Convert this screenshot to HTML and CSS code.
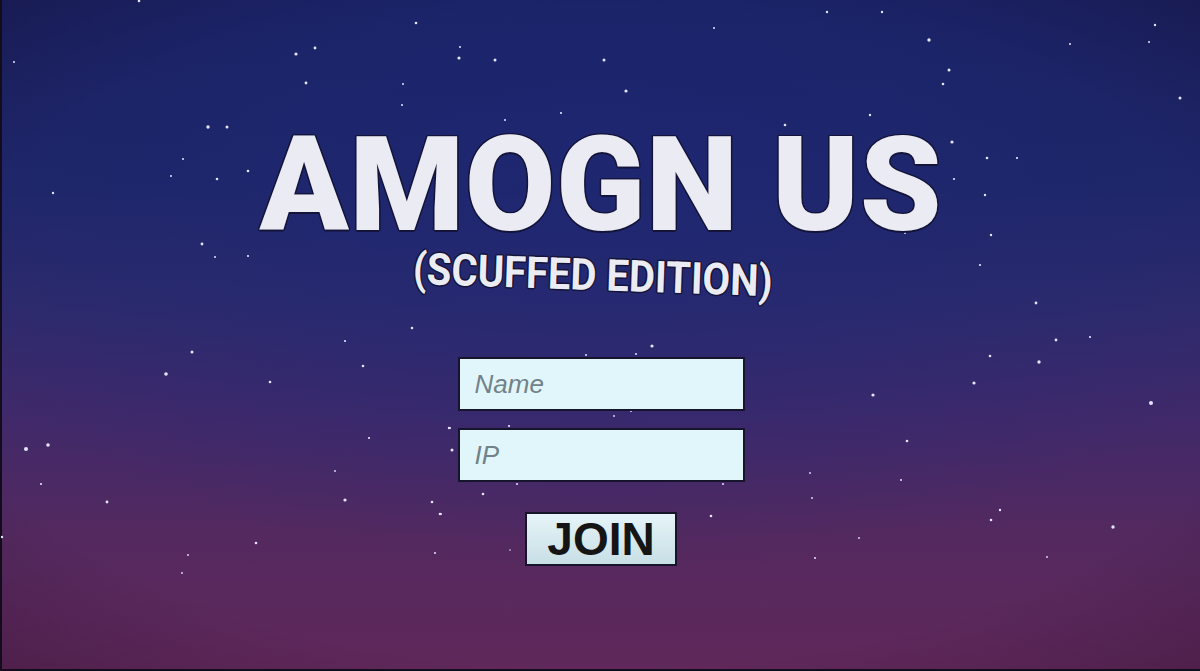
FILE: index.html
```html
<!DOCTYPE html>
<html lang="en">
<head>
  <meta charset="UTF-8" />
  <meta name="viewport" content="width=device-width, initial-scale=1.0"/>
  <title>Amogn Us</title>
  <link rel="stylesheet" href="styles.css">
</head>
<body>

  <!-- night sky -->
  <svg class="stars" viewBox="0 0 1200 671" preserveAspectRatio="none">
    <g fill="#e4e4ff">
      <circle cx="139" cy="1" r="1.3"/>
      <circle cx="14" cy="62" r="1"/>
      <circle cx="296" cy="54" r="1.6"/>
      <circle cx="315" cy="48" r="1.4"/>
      <circle cx="306" cy="83" r="1.4"/>
      <circle cx="208" cy="127" r="1.7"/>
      <circle cx="227" cy="127" r="1.5"/>
      <circle cx="183" cy="159" r="1"/>
      <circle cx="171" cy="176" r="1"/>
      <circle cx="217" cy="179" r="1.3"/>
      <circle cx="248" cy="171" r="1.3"/>
      <circle cx="53" cy="193" r="1.2"/>
      <circle cx="202" cy="244" r="1.4"/>
      <circle cx="215" cy="257" r="1"/>
      <circle cx="248" cy="256" r="1.1"/>
      <circle cx="416" cy="23" r="1.3"/>
      <circle cx="460" cy="47" r="1"/>
      <circle cx="459" cy="58" r="1.6"/>
      <circle cx="495" cy="60" r="1.5"/>
      <circle cx="604" cy="60" r="1.5"/>
      <circle cx="626" cy="91" r="1.6"/>
      <circle cx="561" cy="113" r="1.1"/>
      <circle cx="505" cy="120" r="1"/>
      <circle cx="714" cy="28" r="1"/>
      <circle cx="785" cy="125" r="1.3"/>
      <circle cx="403" cy="84" r="1"/>
      <circle cx="402" cy="105" r="1"/>
      <circle cx="827" cy="12" r="1.2"/>
      <circle cx="882" cy="12" r="1.2"/>
      <circle cx="929" cy="40" r="1.7"/>
      <circle cx="949" cy="70" r="1.5"/>
      <circle cx="943" cy="84" r="1.3"/>
      <circle cx="870" cy="115" r="1.2"/>
      <circle cx="952" cy="142" r="1.6"/>
      <circle cx="987" cy="158" r="1.3"/>
      <circle cx="1017" cy="158" r="1.1"/>
      <circle cx="954" cy="179" r="1.1"/>
      <circle cx="985" cy="195" r="1.2"/>
      <circle cx="991" cy="235" r="1.2"/>
      <circle cx="980" cy="265" r="1.1"/>
      <circle cx="1070" cy="44" r="1"/>
      <circle cx="1155" cy="25" r="1.2"/>
      <circle cx="1149" cy="42" r="1"/>
      <circle cx="1180" cy="98" r="1.5"/>
      <circle cx="905" cy="233" r="1"/>
      <circle cx="192" cy="352" r="1.5"/>
      <circle cx="166" cy="374" r="1.8"/>
      <circle cx="270" cy="382" r="1.3"/>
      <circle cx="26" cy="449" r="2"/>
      <circle cx="48" cy="445" r="1.8"/>
      <circle cx="41" cy="484" r="1.1"/>
      <circle cx="107" cy="502" r="1.4"/>
      <circle cx="2" cy="537" r="1.2"/>
      <circle cx="256" cy="543" r="1.3"/>
      <circle cx="188" cy="555" r="0.9"/>
      <circle cx="182" cy="573" r="0.9"/>
      <circle cx="345" cy="500" r="1.6"/>
      <circle cx="345" cy="341" r="1.1"/>
      <circle cx="363" cy="366" r="1.3"/>
      <circle cx="369" cy="438" r="1.1"/>
      <circle cx="335" cy="471" r="0.9"/>
      <circle cx="412" cy="328" r="1.3"/>
      <circle cx="432" cy="502" r="1.3"/>
      <circle cx="440" cy="514" r="1.3"/>
      <circle cx="435" cy="553" r="1"/>
      <circle cx="449" cy="428" r="1.2"/>
      <circle cx="1036" cy="303" r="1.4"/>
      <circle cx="1056" cy="340" r="1.4"/>
      <circle cx="1090" cy="337" r="1.1"/>
      <circle cx="990" cy="356" r="1.3"/>
      <circle cx="1039" cy="362" r="1.7"/>
      <circle cx="974" cy="383" r="1.6"/>
      <circle cx="873" cy="395" r="1.6"/>
      <circle cx="1151" cy="403" r="2"/>
      <circle cx="907" cy="441" r="1.3"/>
      <circle cx="810" cy="473" r="0.9"/>
      <circle cx="901" cy="480" r="1"/>
      <circle cx="812" cy="498" r="0.9"/>
      <circle cx="1000" cy="510" r="1.2"/>
      <circle cx="991" cy="520" r="1.3"/>
      <circle cx="1113" cy="527" r="1.7"/>
      <circle cx="859" cy="538" r="0.9"/>
      <circle cx="815" cy="558" r="1"/>
      <circle cx="1047" cy="557" r="0.9"/>
      <circle cx="652" cy="346" r="1.6"/>
      <circle cx="586" cy="355" r="1"/>
      <circle cx="636" cy="354" r="1"/>
      <circle cx="631" cy="411" r="1"/>
      <circle cx="614" cy="416" r="0.9"/>
      <circle cx="450" cy="428" r="1.1"/>
      <circle cx="509" cy="426" r="1.1"/>
      <circle cx="452" cy="450" r="1.5"/>
      <circle cx="517" cy="484" r="1"/>
      <circle cx="483" cy="494" r="1.3"/>
      <circle cx="441" cy="514" r="1"/>
      <circle cx="711" cy="516" r="1.3"/>
      <circle cx="510" cy="550" r="0.8"/>
      <circle cx="723" cy="484" r="1"/>
    </g>
  </svg>

  <main class="lobby">
    <h1 class="title">AMOGN US</h1>
    <div class="subtitle">(SCUFFED EDITION)</div>

    <form class="join-form" id="joinForm">
      <input type="text" id="name" class="field" placeholder="Name" />
      <input type="text" id="ip" class="field" placeholder="IP" />
      <button type="submit" class="join-btn">JOIN</button>
    </form>
  </main>

</body>
</html>
```

FILE: styles.css
```css
html, body {
  height: 100%;
}

body {
  margin: 0;
  overflow: hidden;
  font-family: 'Liberation Sans', Arial, sans-serif;
  background:
    radial-gradient(ellipse 60% 55% at 50% 30%, rgba(28, 40, 120, 0.55) 0%, rgba(28, 40, 120, 0) 100%),
    radial-gradient(ellipse 80% 70% at 50% 50%, rgba(0, 0, 0, 0) 70%, rgba(15, 0, 20, 0.25) 100%),
    linear-gradient(to bottom, #1b2264 0%, #1f2668 28%, #2d2a6c 45%, #40296a 62%, #54295f 80%, #60285a 100%);
  box-shadow: inset 2px -2px 0 #120c1c;
}

.stars {
  position: absolute;
  top: 0;
  left: 0;
  width: 100%;
  height: 100%;
  pointer-events: none;
}

.lobby {
  position: relative;
  display: flex;
  flex-direction: column;
  align-items: center;
  padding-left: 2px;
}

/* thin dark outline made of shadows, so overlapping glyph contours stay clean */
.title,
.subtitle {
  color: #ebebf3;
  text-shadow:
    1.5px 0 0 #14143a, -1.5px 0 0 #14143a, 0 1.5px 0 #14143a, 0 -1.5px 0 #14143a,
    1px 1px 0 #14143a, -1px -1px 0 #14143a, 1px -1px 0 #14143a, -1px 1px 0 #14143a;
}

.title {
  margin: 120px 0 0;
  font-family: Roboto, 'Liberation Sans', sans-serif;
  font-weight: 900;
  font-size: 131px;
  line-height: 1;
  letter-spacing: 0.7px;
}

.subtitle {
  margin-top: 2px;
  font-family: Roboto, 'Liberation Sans', sans-serif;
  font-weight: 700;
  font-size: 44px;
  line-height: 1;
  transform: translateX(-8px) rotate(2deg) scaleX(0.91);
}

.join-form {
  display: flex;
  flex-direction: column;
  align-items: center;
  margin-top: 60px;
}

.field {
  box-sizing: border-box;
  width: 287px;
  height: 54px;
  margin-bottom: 17px;
  padding: 0 15px;
  border: 2px solid #17152c;
  background-color: #e1f6fb;
  font-family: 'Liberation Sans', Arial, sans-serif;
  font-size: 26px;
  font-style: italic;
  color: #333;
  outline: none;
}

.field::placeholder {
  color: #718289;
  font-style: italic;
}

.join-btn {
  box-sizing: border-box;
  width: 152px;
  height: 54px;
  margin-top: 13px;
  padding: 0;
  border: 2px solid #17152c;
  background: linear-gradient(to bottom, #e6f4f8, #c8dfe6);
  font-family: 'Liberation Sans', Arial, sans-serif;
  font-weight: bold;
  font-size: 46px;
  line-height: 1;
  color: #151515;
  cursor: pointer;
}
```
